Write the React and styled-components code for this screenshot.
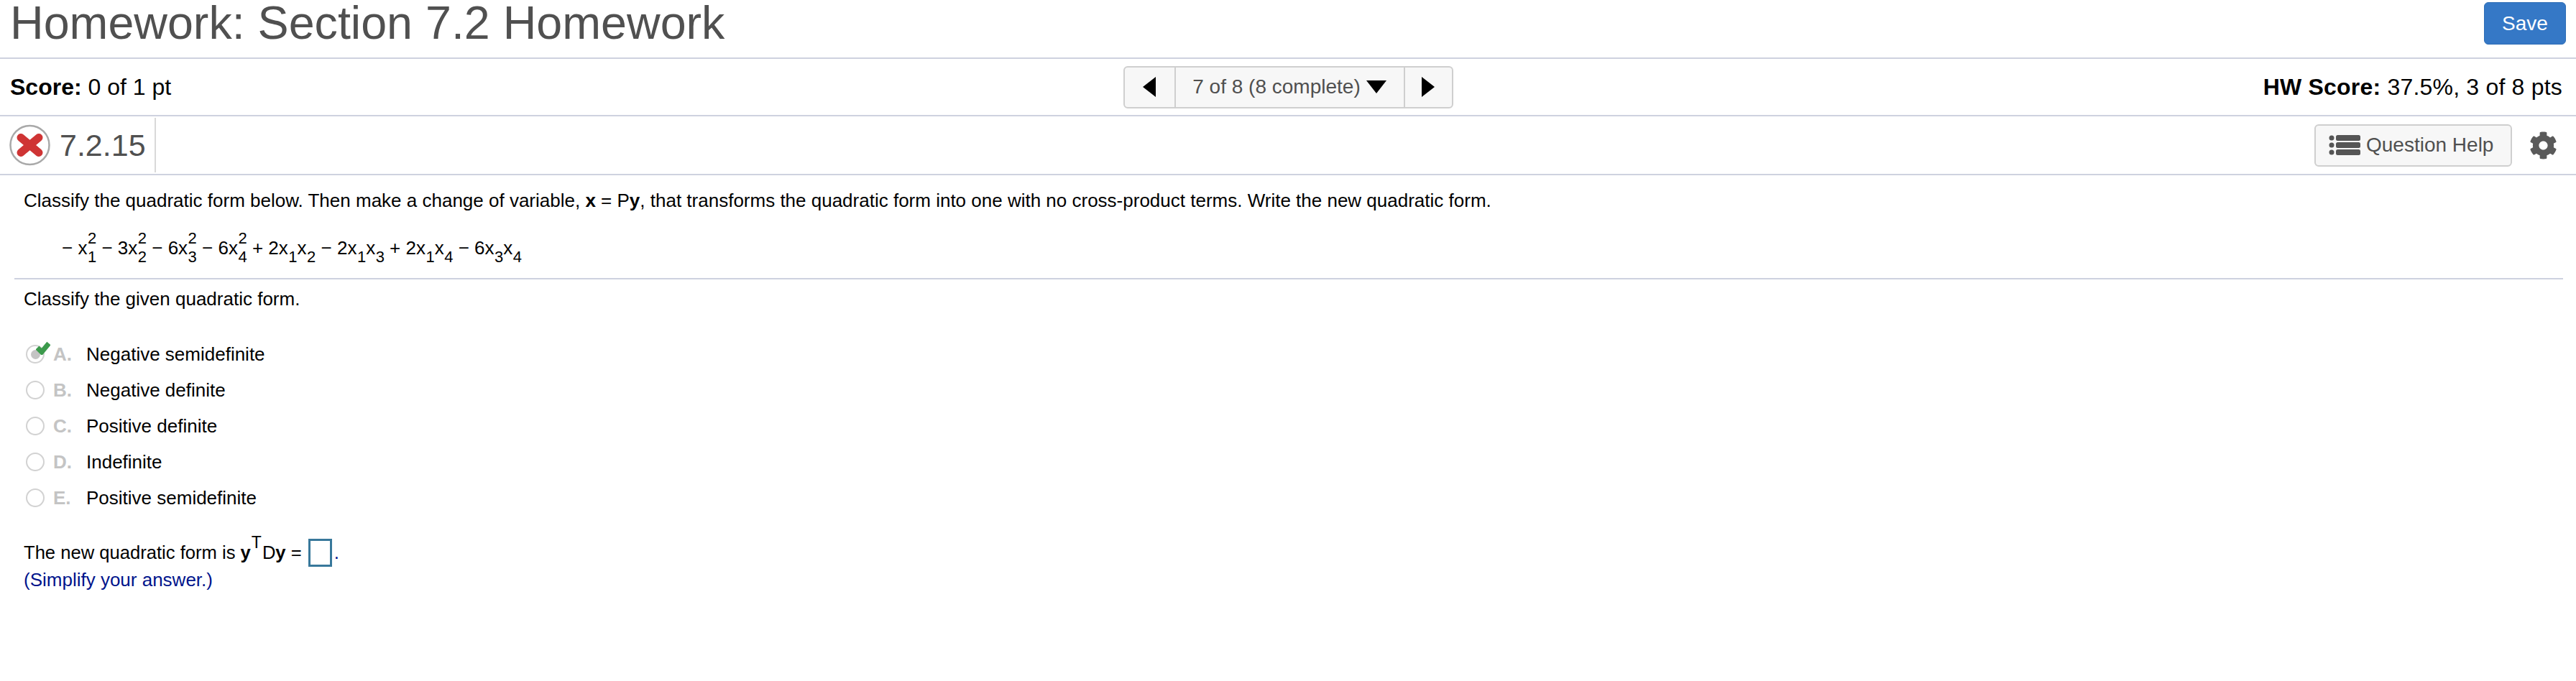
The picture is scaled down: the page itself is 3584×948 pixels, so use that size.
import React from 'react';
import styled, { createGlobalStyle } from 'styled-components';
import { FaCog } from 'react-icons/fa';

const Global = createGlobalStyle`
  html, body { margin: 0; padding: 0; background: #fff; }
  body { font-family: "Liberation Sans", Arial, sans-serif; color: #000; }
`;

const Page = styled.div`
  width: 3584px;
  height: 948px;
  overflow: hidden;
`;

const TitleBar = styled.header`
  height: 82px;
  box-sizing: border-box;
  display: flex;
  align-items: flex-start;
  justify-content: space-between;
  padding: 3px 14px 0 14px;
  border-bottom: 2px solid #ced2df;
`;

const Title = styled.h1`
  margin: -1px 0 0;
  font-size: 64.6px;
  line-height: 60px;
  font-weight: 400;
  color: #505050;
`;

const SaveButton = styled.button`
  width: 114px;
  height: 59px;
  font: 28px "Liberation Sans", Arial, sans-serif;
  color: #fff;
  background: #3578c6;
  border: 1px solid #2e6db5;
  border-radius: 6px;
`;

const ScoreBar = styled.div`
  height: 80px;
  box-sizing: border-box;
  display: grid;
  grid-template-columns: 1fr auto 1fr;
  align-items: center;
  padding: 0 14px;
  border-bottom: 2px solid #ced2df;
  font-size: 32px;
`;

const ScoreRight = styled.div`
  justify-self: end;
  padding-right: 5px;
  letter-spacing: 0.2px;
`;

const Pager = styled.div`
  display: flex;
  height: 59px;
  box-sizing: border-box;
  background: #f7f7f7;
  border: 2px solid #cfcfcf;
  border-radius: 6px;
  color: #505050;
  font-size: 28px;
`;

const PagerCell = styled.div`
  display: flex;
  align-items: center;
  justify-content: center;
  gap: 8px;
  width: ${p => p.$width}px;
  box-sizing: border-box;
  & + & { border-left: 2px solid #cfcfcf; }
`;

const Arrow = styled.span`
  width: 0;
  height: 0;
  border-style: solid;
  border-color: transparent;
  border-width: 14px 0;
  ${p => p.$dir === 'left'
    ? 'border-left-width: 0; border-right: 18px solid #000;'
    : 'border-right-width: 0; border-left: 18px solid #000;'}
`;

const Caret = styled.span`
  width: 0;
  height: 0;
  border-left: 14px solid transparent;
  border-right: 14px solid transparent;
  border-top: 18px solid #000;
`;

const QuestionBar = styled.div`
  height: 82px;
  box-sizing: border-box;
  display: flex;
  align-items: center;
  justify-content: space-between;
  padding: 0 26px 0 13px;
  border-bottom: 2px solid #ced2df;
`;

const QuestionId = styled.div`
  display: flex;
  align-items: center;
  height: 76px;
  width: 204px;
  box-sizing: border-box;
  gap: 13px;
  border-right: 2px solid #d9d9d9;
  font-size: 43px;
  color: #505050;
`;

const QuestionTools = styled.div`
  display: flex;
  align-items: center;
  gap: 24px;
  color: #5a5a5a;
`;

const HelpButton = styled.button`
  display: flex;
  align-items: center;
  gap: 8px;
  width: 275px;
  height: 59px;
  padding: 0 0 0 18px;
  box-sizing: border-box;
  background: #f7f7f7;
  border: 2px solid #cfcfcf;
  border-radius: 6px;
  color: #505050;
  font: 28px "Liberation Sans", Arial, sans-serif;
`;

const Content = styled.main`
  padding: 17px 18px 0 20px;
  font-size: 26px;
`;

const Prompt = styled.div`
  padding-left: 13px;
  line-height: 36px;
  margin-top: ${p => p.$top || 0}px;
`;

const Formula = styled.div`
  display: flex;
  align-items: center;
  height: 60px;
  margin-top: 18px;
  padding-left: 66px;
  white-space: pre;
`;

const Rule = styled.hr`
  margin: 12px 0 0;
  border: 0;
  border-top: 2px solid #ced2df;
`;

const Scripts = styled.span`
  display: inline-flex;
  flex-direction: column;
  align-items: center;
  font-size: 22px;
  line-height: 26px;
  margin: ${p => (p.$single ? '26px 0 0 0.5px' : '0 0 0 0.5px')};
`;

const Options = styled.div`
  display: flex;
  flex-direction: column;
  margin-top: 34px;
  padding-left: 16px;
`;

const Option = styled.div`
  position: relative;
  display: flex;
  align-items: center;
  height: 50px;
`;

const Radio = styled.span`
  width: 26px;
  height: 26px;
  box-sizing: border-box;
  border: 2px solid #d2d2d2;
  border-radius: 50%;
  display: flex;
  align-items: center;
  justify-content: center;
  &::after {
    content: "";
    display: ${p => (p.$checked ? 'block' : 'none')};
    width: 13px;
    height: 13px;
    border-radius: 50%;
    background: #c4c4c4;
  }
`;

const OptionLetter = styled.span`
  width: 46px;
  margin-left: 12px;
  font-weight: 700;
  color: #c4c4c4;
`;

const CheckMark = styled.svg`
  position: absolute;
  left: 14px;
  top: 7px;
`;

const AnswerLine = styled.div`
  display: flex;
  align-items: baseline;
  margin-top: 31px;
  padding-left: 13px;
  font-size: 25.6px;
  white-space: pre;
  line-height: 40px;
`;

const Sup = styled.span`
  position: relative;
  top: -15px;
  font-size: 23px;
  margin: 0 1px 0 1px;
`;

const AnswerBox = styled.span`
  display: inline-block;
  width: 33px;
  height: 39px;
  box-sizing: border-box;
  margin: 0 3px 0 2px;
  border: 3px solid #38789b;
  align-self: center;
`;

const Hint = styled.div`
  padding-left: 13px;
  margin-top: -1px;
  color: #00148c;
  line-height: 36px;
`;

const Dot = styled.span`
  color: #00148c;
`;

const WrongIcon = () => (
  <svg width="57" height="58" viewBox="0 0 57 58">
    <circle cx="28.5" cy="29" r="27" fill="#fff" stroke="#a9a9a9" strokeWidth="2.5" />
    <path d="M16 18.5 L41 39.5 M41 18.5 L16 39.5" stroke="#cf3434" strokeWidth="11" strokeLinecap="round" />
  </svg>
);

const ListIcon = () => (
  <svg width="44" height="30" viewBox="0 0 44 30" fill="#555">
    <circle cx="4" cy="5" r="3.5" />
    <circle cx="4" cy="15" r="3.5" />
    <circle cx="4" cy="25" r="3.5" />
    <rect x="10" y="1" width="34" height="8" rx="2.5" />
    <rect x="10" y="11" width="34" height="8" rx="2.5" />
    <rect x="10" y="21" width="34" height="8" rx="2.5" />
  </svg>
);

const options = [
  ['A.', 'Negative semidefinite', true],
  ['B.', 'Negative definite'],
  ['C.', 'Positive definite'],
  ['D.', 'Indefinite'],
  ['E.', 'Positive semidefinite'],
];

const Both = ({ sup, sub }) => (
  <Scripts>
    <span>{sup}</span>
    <span>{sub}</span>
  </Scripts>
);

const Low = ({ n }) => <Scripts $single>{n}</Scripts>;

export default function App() {
  return (
    <Page>
      <Global />
      <TitleBar>
        <Title>Homework: Section 7.2 Homework</Title>
        <SaveButton>Save</SaveButton>
      </TitleBar>

      <ScoreBar>
        <div><b>Score:</b> 0 of 1 pt</div>
        <Pager>
          <PagerCell $width={69}><Arrow $dir="left" /></PagerCell>
          <PagerCell $width={319}>7 of 8 (8 complete) <Caret /></PagerCell>
          <PagerCell $width={67}><Arrow $dir="right" /></PagerCell>
        </Pager>
        <ScoreRight><b>HW Score:</b> 37.5%, 3 of 8 pts</ScoreRight>
      </ScoreBar>

      <QuestionBar>
        <QuestionId><WrongIcon />7.2.15</QuestionId>
        <QuestionTools>
          <HelpButton><ListIcon />Question Help</HelpButton>
          <FaCog size={39} />
        </QuestionTools>
      </QuestionBar>

      <Content>
        <Prompt>
          Classify the quadratic form below. Then make a change of variable, <b>x</b> = P<b>y</b>, that transforms the quadratic form into one with no cross-product terms. Write the new quadratic form.
        </Prompt>
        <Formula>
          − x<Both sup="2" sub="1" /> − 3x<Both sup="2" sub="2" /> − 6x<Both sup="2" sub="3" /> − 6x<Both sup="2" sub="4" /> + 2x<Low n="1" />x<Low n="2" /> − 2x<Low n="1" />x<Low n="3" /> + 2x<Low n="1" />x<Low n="4" /> − 6x<Low n="3" />x<Low n="4" />
        </Formula>
        <Rule />
        <Prompt $top={9}>Classify the given quadratic form.</Prompt>
        <Options>
          {options.map(([letter, label, checked]) => (
            <Option key={letter}>
              <Radio $checked={checked} />
              {checked && (
                <CheckMark width="20" height="19" viewBox="0 0 20 19">
                  <path d="M2 9 L8 15 L18 3" fill="none" stroke="#3c9a4c" strokeWidth="7" />
                </CheckMark>
              )}
              <OptionLetter>{letter}</OptionLetter>
              <span>{label}</span>
            </Option>
          ))}
        </Options>
        <AnswerLine>
          The new quadratic form is <b>y</b><Sup>T</Sup>D<b>y</b> = <AnswerBox /><Dot>.</Dot>
        </AnswerLine>
        <Hint>(Simplify your answer.)</Hint>
      </Content>
    </Page>
  );
}
